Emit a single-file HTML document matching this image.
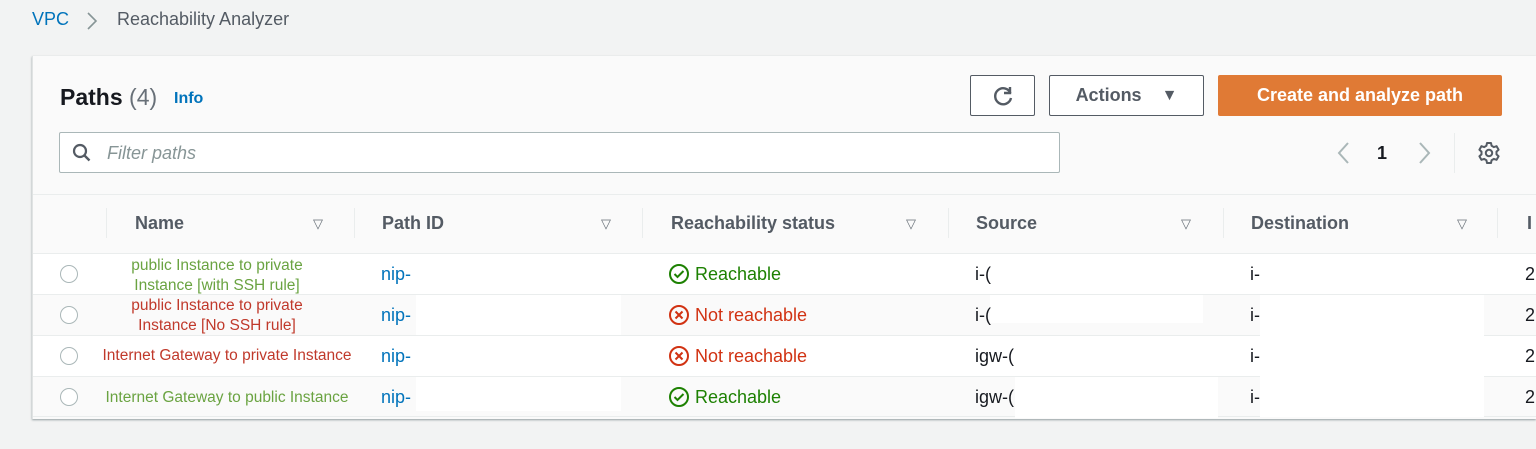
<!DOCTYPE html>
<html><head><meta charset="utf-8"><style>
*{box-sizing:border-box;margin:0;padding:0}
body{width:1536px;height:449px;background:#f2f3f3;font-family:"Liberation Sans",sans-serif;position:relative;overflow:hidden;color:#16191f}
.a{position:absolute}
.bc{top:9px;font-size:18px}
.panel{left:32px;top:56px;width:1504px;height:363px;background:#fafafa;border-left:1px solid #e0e3e3;box-shadow:0 1px 2px rgba(0,28,36,.4)}
.btn{border:1px solid #545b64;border-radius:2px;background:#fff;height:41px;top:75px;font-weight:bold;font-size:18px;color:#545b64;display:flex;align-items:center;justify-content:center}
.th{top:213px;font-size:18px;font-weight:bold;color:#545b64}
.tri{top:216px;font-size:13px;color:#687078}
.sep{top:208px;width:1px;height:30px;background:#eaeded}
.row{left:33px;width:1503px;height:41px;border-top:1px solid #eaeded}
.rad{left:60px;width:18px;height:18px;border:1.5px solid #aab7b8;border-radius:50%;background:#fff}
.nm{font-size:15.5px;text-align:center;line-height:20px;width:240px;left:97px}
.g{color:#6aa341}.r{color:#c0392b}
.nip{left:381px;color:#0073bb;font-size:18px}
.st{left:668px;font-size:18px;display:flex;align-items:center;gap:5px}
.txt{font-size:18px}
.w{background:#fff}
</style></head><body>
<div class="a bc" style="left:32px;color:#0073bb">VPC</div>
<svg class="a" style="left:86px;top:12px" width="12" height="18" viewBox="0 0 12 18"><path d="M2 1l8 8-8 8" fill="none" stroke="#879596" stroke-width="1.6"/></svg>
<div class="a bc" style="left:117px;color:#545b64">Reachability Analyzer</div>
<div class="a panel"></div>
<div class="a" style="left:60px;top:84px;font-size:23px;font-weight:bold">Paths <span style="font-weight:normal;color:#687078">(4)</span></div>
<div class="a" style="left:174px;top:90px;font-size:16px;font-weight:bold;color:#0073bb">Info</div>
<div class="a btn" style="left:970px;width:65px"><svg width="24" height="24" viewBox="0 0 24 24"><path d="M19 3v6h-6M19.5 9A8 8 0 1 0 20 14" fill="none" stroke="#545b64" stroke-width="2.4"/></svg></div>
<div class="a btn" style="left:1049px;width:155px">Actions&nbsp;&nbsp;&nbsp;&nbsp;<span style="font-size:16px">▼</span></div>
<div class="a btn" style="left:1218px;width:284px;border-color:#e07a35;color:#fff;background:#e07a35">Create and analyze path</div>
<div class="a" style="left:59px;top:132px;width:1001px;height:41px;background:#fff;border:1px solid #aab7b8;border-radius:2px"></div>
<svg class="a" style="left:72px;top:143px" width="20" height="20" viewBox="0 0 20 20"><circle cx="8" cy="8" r="6" fill="none" stroke="#545b64" stroke-width="2.2"/><path d="M12.5 12.5l5 5" stroke="#545b64" stroke-width="2.4"/></svg>
<div class="a" style="left:107px;top:143px;font-size:18px;font-style:italic;color:#879596">Filter paths</div>
<svg class="a" style="left:1336px;top:141px" width="14" height="24" viewBox="0 0 14 24"><path d="M12 2L3 12l9 10" fill="none" stroke="#aab7b8" stroke-width="2"/></svg>
<div class="a" style="left:1377px;top:143px;font-size:18px;font-weight:bold">1</div>
<svg class="a" style="left:1418px;top:141px" width="14" height="24" viewBox="0 0 14 24"><path d="M2 2l9 10-9 10" fill="none" stroke="#aab7b8" stroke-width="2"/></svg>
<div class="a" style="left:1454px;top:133px;width:1px;height:40px;background:#eaeded"></div>
<svg class="a" style="left:1477px;top:141px" width="24" height="24" viewBox="0 0 24 24"><path d="M10 2h4l.6 2.8 2.3 1.3 2.7-.9 2 3.5-2.1 1.9v2.8l2.1 1.9-2 3.5-2.7-.9-2.3 1.3L14 22h-4l-.6-2.8-2.3-1.3-2.7.9-2-3.5 2.1-1.9V10.6L2.4 8.7l2-3.5 2.7.9 2.3-1.3z" fill="none" stroke="#545b64" stroke-width="2" stroke-linejoin="round"/><circle cx="12" cy="12" r="3.2" fill="none" stroke="#545b64" stroke-width="2"/></svg>
<div class="a" style="left:33px;top:194px;width:1503px;height:1px;background:#eaeded"></div>
<div class="a sep" style="left:106px"></div><div class="a sep" style="left:354px"></div><div class="a sep" style="left:642px"></div><div class="a sep" style="left:948px"></div><div class="a sep" style="left:1223px"></div><div class="a sep" style="left:1497px"></div>
<div class="a th" style="left:135px">Name</div><div class="a tri" style="left:313px">▽</div>
<div class="a th" style="left:382px">Path ID</div><div class="a tri" style="left:601px">▽</div>
<div class="a th" style="left:671px">Reachability status</div><div class="a tri" style="left:906px">▽</div>
<div class="a th" style="left:976px">Source</div><div class="a tri" style="left:1181px">▽</div>
<div class="a th" style="left:1251px">Destination</div><div class="a tri" style="left:1457px">▽</div>
<div class="a th" style="left:1527px">I</div>

<div class="a row" style="top:253px;background:#fff"></div>
<div class="a row" style="top:294px;background:#fafafa"></div>
<div class="a row" style="top:335px;background:#fff"></div>
<div class="a row" style="top:376px;background:#fafafa;border-bottom:1px solid #eaeded"></div>

<div class="a w" style="left:416px;top:295px;width:205px;height:40px"></div>
<div class="a w" style="left:416px;top:377px;width:205px;height:34px"></div>
<div class="a w" style="left:990px;top:295px;width:213px;height:28px"></div>
<div class="a w" style="left:1015px;top:377px;width:203px;height:41px"></div>
<div class="a w" style="left:1260px;top:295px;width:224px;height:122px"></div>

<div class="a rad" style="top:265px"></div><div class="a rad" style="top:306px"></div><div class="a rad" style="top:347px"></div><div class="a rad" style="top:388px"></div>
<div class="a nm g" style="top:256px">public Instance to private<br>Instance [with SSH rule]</div>
<div class="a nm r" style="top:296px">public Instance to private<br>Instance [No SSH rule]</div>
<div class="a nm r" style="top:346px;left:87px;width:280px">Internet Gateway to private Instance</div>
<div class="a nm g" style="top:388px;left:87px;width:280px">Internet Gateway to public Instance</div>
<div class="a nip" style="top:264px">nip-</div><div class="a nip" style="top:305px">nip-</div><div class="a nip" style="top:346px">nip-</div><div class="a nip" style="top:387px">nip-</div>
<div class="a st" style="top:263px;color:#1d8102"><svg width="22" height="22"><circle cx="11" cy="11" r="9" fill="none" stroke="#1d8102" stroke-width="2"/><path d="M6.5 11l3 3 6-6" fill="none" stroke="#1d8102" stroke-width="2"/></svg>Reachable</div>
<div class="a st" style="top:304px;color:#d13212"><svg width="22" height="22"><circle cx="11" cy="11" r="9" fill="none" stroke="#d13212" stroke-width="2"/><path d="M7.5 7.5l7 7M14.5 7.5l-7 7" stroke="#d13212" stroke-width="2"/></svg>Not reachable</div>
<div class="a st" style="top:345px;color:#d13212"><svg width="22" height="22"><circle cx="11" cy="11" r="9" fill="none" stroke="#d13212" stroke-width="2"/><path d="M7.5 7.5l7 7M14.5 7.5l-7 7" stroke="#d13212" stroke-width="2"/></svg>Not reachable</div>
<div class="a st" style="top:386px;color:#1d8102"><svg width="22" height="22"><circle cx="11" cy="11" r="9" fill="none" stroke="#1d8102" stroke-width="2"/><path d="M6.5 11l3 3 6-6" fill="none" stroke="#1d8102" stroke-width="2"/></svg>Reachable</div>
<div class="a txt" style="left:975px;top:264px">i-(</div><div class="a txt" style="left:975px;top:305px">i-(</div><div class="a txt" style="left:975px;top:346px">igw-(</div><div class="a txt" style="left:975px;top:387px">igw-(</div>
<div class="a txt" style="left:1250px;top:264px">i-</div><div class="a txt" style="left:1250px;top:305px">i-</div><div class="a txt" style="left:1250px;top:346px">i-</div><div class="a txt" style="left:1250px;top:387px">i-</div>
<div class="a txt" style="left:1525px;top:264px">2</div><div class="a txt" style="left:1525px;top:305px">2</div><div class="a txt" style="left:1525px;top:346px">2</div><div class="a txt" style="left:1525px;top:387px">2</div>
</body></html>
